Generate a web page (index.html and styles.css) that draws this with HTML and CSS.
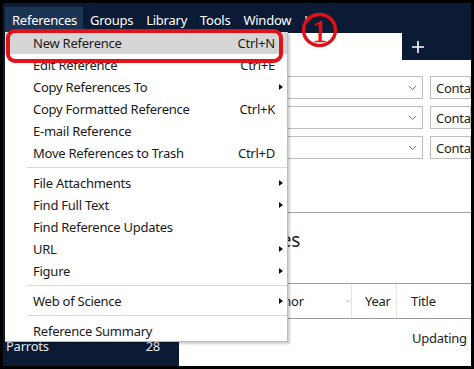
FILE: index.html
```html
<!doctype html>
<html>

<head>
	<title>EndNote - References menu</title>
	<link rel="stylesheet" href="styles.css">
</head>

<body>
	<div class="screen">
		<div class="window">
			<nav class="menubar">
				<span class="menu-title active">References</span>
				<span class="menu-title">Groups</span>
				<span class="menu-title">Library</span>
				<span class="menu-title">Tools</span>
				<span class="menu-title">Window</span>
				<span class="menu-title">Help</span>
			</nav>
			<div class="workspace">
				<aside class="sidebar">
					<div class="group-row"><span>Parrots</span><span>28</span></div>
				</aside>
				<main class="main">
					<div class="tabstrip">
						<div class="tab"></div>
						<svg class="tab-add" width="12" height="12" viewBox="0 0 12 12">
							<path d="M6 0v12M0 6h12" stroke="#fff" stroke-width="1.6" fill="none" />
						</svg>
					</div>
					<div class="search">
						<div class="search-row">
							<div class="field field-select"><svg class="chev" width="9" height="6" viewBox="0 0 9 6"><path d="M1 1l3.5 3.5L8 1" stroke="#777" fill="none" /></svg></div>
							<div class="field field-op">Contains</div>
						</div>
						<div class="search-row">
							<div class="field field-select"><svg class="chev" width="9" height="6" viewBox="0 0 9 6"><path d="M1 1l3.5 3.5L8 1" stroke="#777" fill="none" /></svg></div>
							<div class="field field-op">Contains</div>
						</div>
						<div class="search-row">
							<div class="field field-select"><svg class="chev" width="9" height="6" viewBox="0 0 9 6"><path d="M1 1l3.5 3.5L8 1" stroke="#777" fill="none" /></svg></div>
							<div class="field field-op">Contains</div>
						</div>
					</div>
					<div class="library-head">
						<h1>All References</h1>
					</div>
					<div class="columns">
						<div class="col col-author">Author<svg class="chev" width="9" height="6" viewBox="0 0 9 6"><path d="M1 1l3.5 3.5L8 1" stroke="#aaa" fill="none" /></svg></div>
						<div class="col col-year">Year</div>
						<div class="col col-title">Title</div>
					</div>
					<div class="ref-row">
						<span class="cell-author"></span>
						<span class="cell-year"></span>
						<span class="cell-title">Updating</span>
					</div>
				</main>
			</div>
		</div>

		<!-- open References menu -->
		<div class="dropdown">
			<div class="item hover"><span>New Reference</span><span class="key">Ctrl+N</span><span></span></div>
			<div class="item"><span>Edit Reference</span><span class="key">Ctrl+E</span><span></span></div>
			<div class="item"><span>Copy References To</span><span class="key"></span><span class="sub"></span></div>
			<div class="item"><span>Copy Formatted Reference</span><span class="key">Ctrl+K</span><span></span></div>
			<div class="item"><span>E-mail Reference</span><span class="key"></span><span></span></div>
			<div class="item"><span>Move References to Trash</span><span class="key">Ctrl+D</span><span></span></div>
			<div class="sep"></div>
			<div class="item"><span>File Attachments</span><span class="key"></span><span class="sub"></span></div>
			<div class="item"><span>Find Full Text</span><span class="key"></span><span class="sub"></span></div>
			<div class="item"><span>Find Reference Updates</span><span class="key"></span><span></span></div>
			<div class="item"><span>URL</span><span class="key"></span><span class="sub"></span></div>
			<div class="item"><span>Figure</span><span class="key"></span><span class="sub"></span></div>
			<div class="sep"></div>
			<div class="item"><span>Web of Science</span><span class="key"></span><span class="sub"></span></div>
			<div class="sep"></div>
			<div class="item"><span>Reference Summary</span><span class="key"></span><span></span></div>
		</div>

		<div class="callout"></div>
		<svg class="step-badge" width="38" height="37" viewBox="0 0 38 37">
			<defs>
				<linearGradient id="badge-bg" x1="0" y1="0" x2="0" y2="37" gradientUnits="userSpaceOnUse">
					<stop offset="0.56" stop-color="#0b1b35" />
					<stop offset="0.56" stop-color="#fff" />
				</linearGradient>
			</defs>
			<ellipse cx="18.5" cy="18" rx="16" ry="15.5" stroke="#e0101a" stroke-width="3.4" fill="url(#badge-bg)" />
			<text x="18.5" y="30" text-anchor="middle" class="step-num">1</text>
		</svg>
	</div>
</body>

</html>
```

FILE: styles.css
```css
html,
body {
	margin: 0;
	background: #000;
}

.screen {
	position: relative;
	width: 474px;
	height: 369px;
	padding: 3px;
	box-sizing: border-box;
	background: #000;
	font-family: "Noto Sans", "Open Sans", sans-serif;
	font-size: 13px;
	letter-spacing: -0.25px;
	color: #1a1a1a;
	overflow: hidden;
}

.window {
	display: flex;
	flex-direction: column;
	height: 100%;
	background: #0b1b35;
}

/* menu bar */
.menubar {
	display: flex;
	height: 30px;
	padding: 4px 0 0 2px;
	box-sizing: border-box;
	color: #fff;
}

.menu-title {
	padding: 0 6px 0 7px;
	line-height: 26px;
}

.menu-title.active {
	background: #1c3454;
}

.workspace {
	display: flex;
	flex: 1;
	min-height: 0;
}

/* left groups panel */
.sidebar {
	width: 176px;
	flex: none;
	display: flex;
	flex-direction: column;
	justify-content: flex-end;
	color: #e8ecf2;
}

.group-row {
	display: flex;
	justify-content: space-between;
	height: 22px;
	line-height: 22px;
	padding: 0 19px 9px 3px;
}

/* main library area */
.main {
	flex: 1;
	display: flex;
	flex-direction: column;
	background: #fff;
	min-width: 0;
}

.tabstrip {
	display: flex;
	align-items: center;
	height: 27px;
	background: #0b1b35;
}

.tab {
	align-self: stretch;
	width: 213px;
	margin-left: 10px;
	background: #fff;
}

.tab-add {
	margin-left: 10px;
}

.search {
	display: flex;
	flex-direction: column;
	gap: 7px;
	height: 152px;
	padding-top: 16px;
	box-sizing: border-box;
}

.search-row {
	display: flex;
	gap: 7px;
	height: 23px;
	padding-left: 11px;
}

.field {
	border: 1px solid #bdbdbd;
	box-sizing: border-box;
	display: flex;
	align-items: center;
}

.field-select {
	width: 233px;
	flex: none;
	justify-content: flex-end;
	padding-right: 5px;
}

.field-op {
	flex: 1;
	padding-left: 5px;
	white-space: nowrap;
	overflow: hidden;
	color: #222;
}

.library-head {
	display: flex;
	justify-content: flex-end;
	width: 121px;
	height: 71px;
	border-top: 1px solid #a4a4a4;
	box-sizing: border-box;
	overflow: visible;
}

.main .library-head {
	width: auto;
	padding-right: 171px;
}

.library-head h1 {
	flex: none;
	margin: 0;
	padding-top: 14px;
	font-size: 19px;
	font-weight: normal;
	color: #222;
	white-space: nowrap;
}

.columns,
.ref-row {
	display: grid;
	grid-template-columns: 173px 45px 1fr;
}

.columns {
	height: 36px;
	border-top: 1px solid #9c9c9c;
	border-bottom: 1px solid #9c9c9c;
	box-sizing: border-box;
}

.col {
	display: flex;
	align-items: center;
	white-space: nowrap;
	color: #222;
}

.col-author {
	padding-left: 84px;
	border-right: 1px solid #e6e6e6;
}

.col-author .chev {
	margin-left: 41px;
}

.col-year {
	padding-left: 13px;
	border-right: 1px solid #e6e6e6;
}

.col-title {
	padding-left: 14px;
}

.ref-row {
	height: 38px;
	align-items: center;
}

.cell-title {
	padding-left: 15px;
	white-space: nowrap;
	color: #222;
}

/* dropdown menu */
.dropdown {
	position: absolute;
	left: 5px;
	top: 32px;
	width: 283px;
	height: 310px;
	box-sizing: border-box;
	background: #fff;
	border-right: 1px solid #bcbcbc;
	border-bottom: 1px solid #bcbcbc;
	box-shadow: 2px 2px 2px rgba(0, 0, 0, 0.2);
}

.item {
	display: grid;
	grid-template-columns: 1fr auto 12px;
	align-items: center;
	height: 22px;
	padding-left: 28px;
	white-space: nowrap;
}

.item.hover {
	background: #d6d6d6;
}

.key {
	text-align: right;
}

.sub {
	justify-self: start;
	margin-left: 4px;
	width: 0;
	height: 0;
	border-left: 4px solid #111;
	border-top: 3px solid transparent;
	border-bottom: 3px solid transparent;
}

.sep {
	height: 8px;
	margin-left: 22px;
	position: relative;
}

.sep::after {
	content: "";
	position: absolute;
	left: 0;
	right: 0;
	top: 3px;
	height: 1px;
	background: #d8d8d8;
}

/* annotation */
.callout {
	position: absolute;
	left: 6px;
	top: 29px;
	width: 277px;
	height: 34px;
	box-sizing: border-box;
	border: 4px solid #e2121b;
	border-radius: 9px;
}

.step-badge {
	position: absolute;
	left: 301px;
	top: 12px;
}

.step-num {
	font-family: "Liberation Serif", serif;
	font-size: 31px;
	fill: #e0101a;
	stroke: #e0101a;
	stroke-width: 0.6px;
}
```
